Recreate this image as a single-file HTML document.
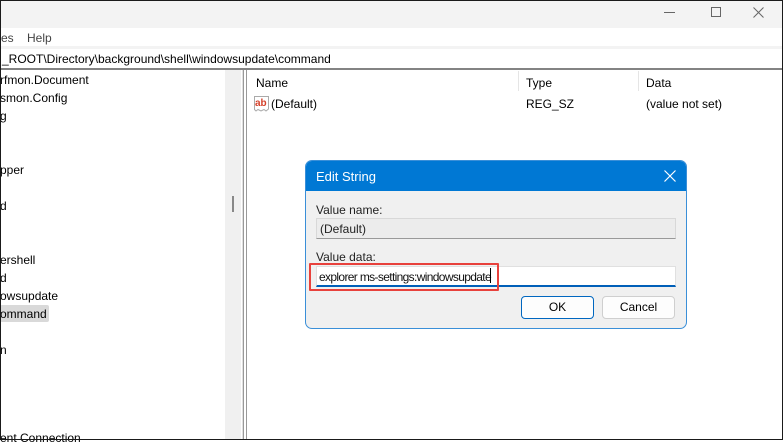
<!DOCTYPE html>
<html><head><meta charset="utf-8"><style>
*{margin:0;padding:0;box-sizing:border-box}
body{width:783px;height:440px;overflow:hidden;background:#fff;font-family:"Liberation Sans",sans-serif;font-size:12px;color:#000;position:relative}
.a{position:absolute;white-space:nowrap}
</style></head><body>
<div class="a" style="left:0;top:0;width:783px;height:440px;border:1px solid #1a1a1a;z-index:50;pointer-events:none"></div>
<div class="a" style="left:0;top:0;width:783px;height:28px;background:#f3f3f3"></div>
<div class="a" style="left:664px;top:12px;width:11px;height:1px;background:#666"></div>
<div class="a" style="left:711px;top:7px;width:10px;height:10px;border:1px solid #666"></div>
<svg class="a" style="left:753px;top:7px" width="11" height="11"><path d="M0.5 0.5L10.5 10.5M10.5 0.5L0.5 10.5" stroke="#666" stroke-width="1"/></svg>
<div class="a" style="left:0;top:28px;width:783px;height:18px;background:#fff"></div>
<div class="a" style="left:1px;top:31px;color:#444">es</div>
<div class="a" style="left:27px;top:31px;color:#444">Help</div>
<div class="a" style="left:0;top:46px;width:783px;height:3px;background:#f3f3f3"></div>
<div class="a" style="left:2px;top:52px">_ROOT\Directory\background\shell\windowsupdate\command</div>
<div class="a" style="left:0;top:68px;width:783px;height:2px;background:#838383"></div>
<div class="a" style="left:225px;top:70px;width:16px;height:370px;background:#f0f0f0"></div>
<div class="a" style="left:232px;top:196px;width:2px;height:16px;background:#888"></div>
<div class="a" style="left:242px;top:70px;width:1px;height:370px;background:#e0e0e0"></div>
<div class="a" style="left:243px;top:70px;width:1px;height:370px;background:#999"></div>
<div class="a" style="left:246px;top:70px;width:1px;height:370px;background:#999"></div>
<div class="a" style="left:0;top:73px">rfmon.Document</div>
<div class="a" style="left:0;top:91px">smon.Config</div>
<div class="a" style="left:0;top:109px">g</div>
<div class="a" style="left:0;top:163px">pper</div>
<div class="a" style="left:0;top:199px">d</div>
<div class="a" style="left:0;top:253px">ershell</div>
<div class="a" style="left:0;top:271px">d</div>
<div class="a" style="left:0;top:289px">owsupdate</div>
<div class="a" style="left:0;top:305px;width:49px;height:17px;background:#d9d9d9;border-radius:2px"></div>
<div class="a" style="left:0;top:307px">ommand</div>
<div class="a" style="left:0;top:343px">n</div>
<div class="a" style="left:0;top:431px">ent Connection</div>
<div class="a" style="left:256px;top:76px">Name</div>
<div class="a" style="left:518px;top:71px;width:1px;height:20px;background:#e5e5e5"></div>
<div class="a" style="left:526px;top:76px">Type</div>
<div class="a" style="left:638px;top:71px;width:1px;height:20px;background:#e5e5e5"></div>
<div class="a" style="left:646px;top:76px">Data</div>
<svg class="a" style="left:253px;top:95px" width="17" height="17"><path d="M1.5 1.5H15.5V14L13 16L11 14.5L8 16L5 14.5L3 16L1.5 14.5Z" fill="#fff" stroke="#aaa"/><text x="2" y="11" font-family="Liberation Sans" font-size="10" font-weight="bold" fill="#d4402a">ab</text></svg>
<div class="a" style="left:271px;top:97px">(Default)</div>
<div class="a" style="left:526px;top:97px">REG_SZ</div>
<div class="a" style="left:646px;top:97px">(value not set)</div>
<div class="a" style="left:305px;top:160px;width:382px;height:169px;background:#f0f0f0;border:1px solid #3a8fd8;border-radius:7px;overflow:hidden">
<div class="a" style="left:0;top:0;width:382px;height:30px;background:#0078d4"></div>
<div class="a" style="left:10px;top:8px;color:#fff;font-size:13px">Edit String</div>
<svg class="a" style="left:358px;top:9px" width="12" height="12"><path d="M0.5 0.5L11.5 11.5M11.5 0.5L0.5 11.5" stroke="#fff" stroke-width="1.2"/></svg>
<div class="a" style="left:10px;top:42px;color:#222">Value name:</div>
<div class="a" style="left:10px;top:57px;width:360px;height:21px;background:#ececec;border:1px solid #d8d8d8;border-bottom-color:#999"></div>
<div class="a" style="left:14px;top:61px;color:#222">(Default)</div>
<div class="a" style="left:10px;top:89px;color:#222">Value data:</div>
<div class="a" style="left:10px;top:105px;width:360px;height:21px;background:#fff;border:1px solid #e0e0e0;border-bottom:2px solid #005fb8"></div>
<div class="a" style="left:13px;top:109px;color:#111;letter-spacing:-0.65px">explorer ms-settings:windowsupdate</div>
<div class="a" style="left:184px;top:107px;width:1px;height:15px;background:#000"></div>
<div class="a" style="left:3px;top:102px;width:190px;height:28px;border:2px solid #e8413c;border-radius:1px"></div>
<div class="a" style="left:215px;top:135px;width:73px;height:23px;background:#fdfdfd;border:1px solid #0067c0;border-radius:4px;text-align:center;line-height:21px">OK</div>
<div class="a" style="left:296px;top:135px;width:73px;height:23px;background:#fdfdfd;border:1px solid #cfcfcf;border-radius:4px;text-align:center;line-height:21px">Cancel</div>
</div>
</body></html>
